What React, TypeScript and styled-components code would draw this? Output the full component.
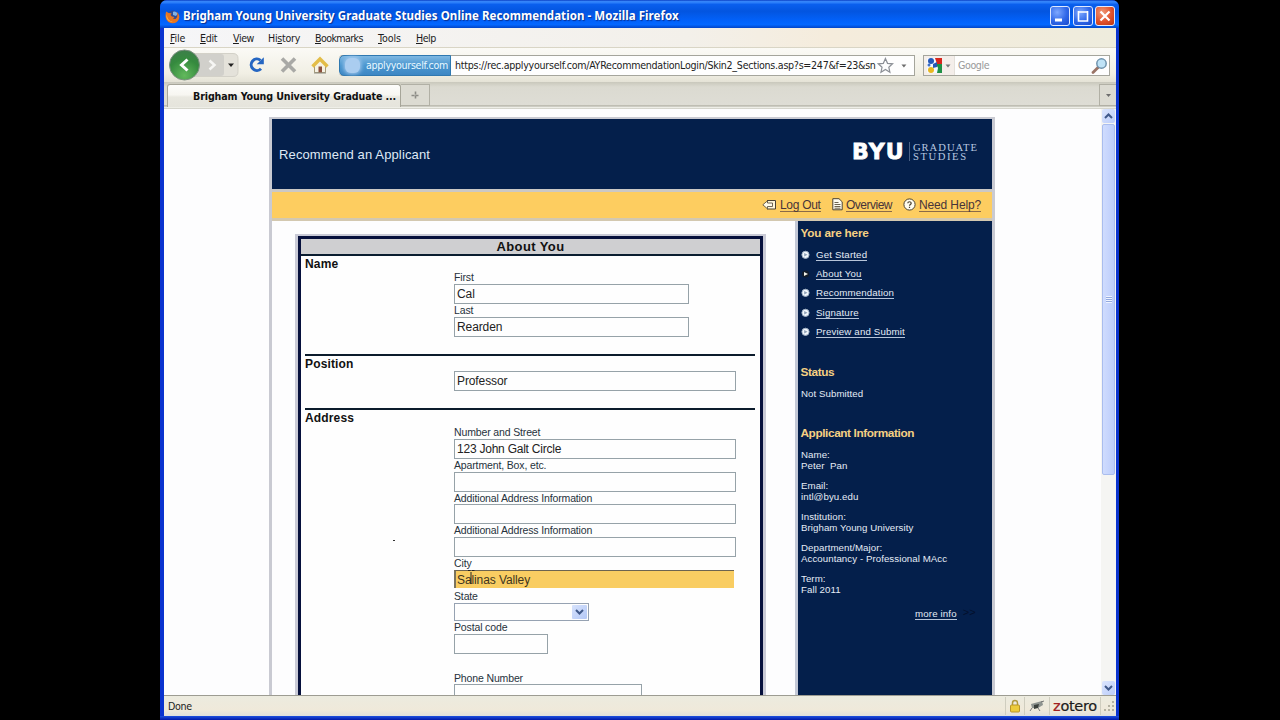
import React from 'react';
import styled, { createGlobalStyle } from 'styled-components';

const chromeFont = '"DejaVu Sans Condensed", "DejaVu Sans", sans-serif';
const pageFont = '"Liberation Sans", Arial, sans-serif';

const GlobalStyle = createGlobalStyle`
  * { box-sizing: border-box; }
  body { margin: 0; background: #000; overflow: hidden; }
`;

const Desktop = styled.div`
  width: 1280px;
  height: 720px;
  padding-left: 160px;
  background: #000;
  overflow: hidden;
`;

const Window = styled.div`
  width: 959px;
  height: 720px;
  display: flex;
  flex-direction: column;
  border-radius: 7px 7px 0 0;
  overflow: hidden;
  background: #0a33cf;
  position: relative;
`;

const TitleBar = styled.div`
  height: 28px;
  flex: none;
  display: flex;
  align-items: center;
  padding: 4px 4px 0 5px;
  background: linear-gradient(#0a3fc4 0, #3a8cff 6%, #0a5fee 16%, #0355e0 40%, #0262fb 75%, #0468ff 88%, #0245c8 100%);
`;

const TitleText = styled.div`
  flex: 1;
  margin-left: 3px;
  color: #fff;
  font: 700 11.5px/20px "Noto Sans", sans-serif;
  letter-spacing: 0.07px;
  white-space: nowrap;
  text-shadow: 1px 1px 1px #0a2f90;
`;

const CaptionButton = styled.div<{ $close?: boolean }>`
  width: 20px;
  height: 20px;
  margin-left: 2.5px;
  border: 1px solid #dfe9ff;
  border-radius: 3px;
  background: ${(p) =>
    p.$close
      ? 'radial-gradient(circle at 35% 30%, #f09a78, #e0512c 55%, #b93412)'
      : 'radial-gradient(circle at 35% 30%, #7ea8ff, #2f67e8 55%, #1848cc)'};
  svg { display: block; }
`;

const Body = styled.div`
  flex: 1;
  min-height: 0;
  margin: 0 3px 0 4px;
  display: flex;
  flex-direction: column;
  background: #efede0;
`;

const MenuBar = styled.div`
  height: 20px;
  flex: none;
  display: flex;
  align-items: center;
  padding-left: 6px;
  background: linear-gradient(90deg, #f6f6f8, #f3f0ea 55%, #f5ecdc 70%, #eeecdd);
  border-bottom: 1px solid #d9d5c5;
  font: 10.6px/18px ${chromeFont};
  color: #1c1c1c;
`;

const MenuItem = styled.span<{ $w: number; $ls?: number }>`
  width: ${(p) => p.$w}px;
  letter-spacing: ${(p) => p.$ls ?? -0.4}px;
  white-space: nowrap;
  u { text-underline-offset: 1px; }
`;

const Toolbar = styled.div`
  height: 34px;
  flex: none;
  display: flex;
  align-items: center;
  padding: 0 6px 0 4px;
  background: linear-gradient(#fbfaf6, #f1efe4 75%, #e4e2d6);
`;

const NavGroup = styled.div`
  width: 72px;
  height: 34px;
  flex: none;
`;

const ToolIcon = styled.div<{ $w: number; $ml: number }>`
  width: ${(p) => p.$w}px;
  height: 20px;
  margin-left: ${(p) => p.$ml}px;
  flex: none;
  svg { display: block; overflow: visible; }
`;

const UrlBar = styled.div`
  width: 576px;
  height: 21px;
  margin-left: 10px;
  flex: none;
  display: flex;
  align-items: center;
  background: #fefefe;
  border: 1px solid #a5a59c;
  border-left: none;
  border-radius: 4px 0 0 4px;
  font: 10.6px/19px ${chromeFont};
`;

const SiteBadge = styled.div`
  width: 112px;
  height: 21px;
  flex: none;
  display: flex;
  align-items: center;
  border: 1px solid #2f78b0;
  border-radius: 5px 0 0 5px;
  background: linear-gradient(#7fb8e2, #4a96cf 50%, #3d87c4);
  color: #e9f8ff;
  letter-spacing: -0.3px;
`;

const BadgeGlow = styled.span`
  width: 15px;
  height: 15px;
  margin: 0 6px 0 5px;
  border-radius: 6px;
  background: #aacdf0;
  box-shadow: 0 0 4px 1px #aacdf0;
`;

const UrlText = styled.div`
  width: 426px;
  margin-left: 4px;
  overflow: hidden;
  white-space: nowrap;
  color: #222;
  letter-spacing: -0.27px;
`;

const SearchBox = styled.div`
  width: 188px;
  height: 21px;
  margin-left: 8px;
  display: flex;
  align-items: center;
  background: #fefefe;
  border: 1px solid #a5a59c;
  font: 10.6px/19px ${chromeFont};
  color: #999;
  letter-spacing: -0.4px;
`;

const SearchEngine = styled.div`
  width: 31px;
  height: 19px;
  margin-right: 3px;
  background: #f4eeea;
  border-right: 1px solid #e4e0da;
`;

const SearchHint = styled.span`
  flex: 1;
`;

const TabStrip = styled.div`
  height: 27px;
  flex: none;
  display: flex;
  align-items: stretch;
  padding: 2px 0 0 3px;
  background: linear-gradient(#c9c8bc 0, #dbdad1 5px, #deddd5 23px, #a09f92 24px, #fafaf4 25px, #c9c9c0 27px);
`;

const Tab = styled.div`
  width: 234px;
  height: 23px;
  padding-left: 25px;
  border: 1px solid #a6a599;
  border-bottom: none;
  border-radius: 3px 3px 0 0;
  background: linear-gradient(#fdfdfb, #f7f6f1 45%, #e9e8e0 55%, #e5e4dc);
  font: 700 10.6px/22px ${chromeFont};
  letter-spacing: -0.11px;
  white-space: nowrap;
  color: #111;
`;

const NewTab = styled.div`
  width: 29px;
  height: 22px;
  border: 1px solid #b1b0a5;
  border-left: none;
  background: #dcdbd2;
`;

const TabMenu = styled.div`
  width: 17px;
  height: 22px;
  margin-left: auto;
  border: 1px solid #b1b0a5;
  border-right: none;
  background: #dcdbd2;
`;

const Viewport = styled.div`
  flex: 1;
  min-height: 0;
  display: flex;
  overflow: hidden;
  background: #fdfdfe;
  position: relative;
`;

const PageArea = styled.div`
  flex: 1;
  padding: 8px 0 0 105px;
  overflow: hidden;
  font-family: ${pageFont};
`;

const Page = styled.div`
  width: 726px;
  height: 600px;
  border: 3px solid #c9cad2;
  border-top-width: 2px;
  border-bottom: none;
  display: flex;
  flex-direction: column;
`;

const Banner = styled.header`
  height: 70px;
  flex: none;
  display: flex;
  align-items: center;
  justify-content: space-between;
  padding: 0 14px 0 7px;
  background: #041f4b;
  color: #dfe9f5;
`;

const BannerTitle = styled.div`
  font-size: 13px;
  letter-spacing: 0.13px;
`;

const Logo = styled.div`
  display: flex;
  align-items: center;
  margin-top: -5px;
`;

const LogoMark = styled.span`
  font: 700 22px/18px "DejaVu Sans", sans-serif;
  letter-spacing: 1.2px;
  color: #fff;
  -webkit-text-stroke: 0.8px #fff;
`;

const LogoWords = styled.div`
  margin-left: 4px;
  padding: 1px 0 0 3px;
  height: 19px;
  border-left: 1px solid #4a6186;
  font: 10.6px/9px "Liberation Serif", serif;
  color: #b9c8e0;
`;

const LogoWord = styled.div<{ $ls: number }>`
  letter-spacing: ${(p) => p.$ls}px;
  white-space: nowrap;
`;

const LinkBar = styled.nav`
  height: 32px;
  flex: none;
  display: flex;
  align-items: center;
  justify-content: flex-end;
  padding-right: 11px;
  background: #fdcd60;
  border-top: 3px solid #cbc8c4;
  border-bottom: 3px solid #d3c8b0;
  font-size: 12px;
  color: #47343a;
`;

const BarLink = styled.span<{ $w: number }>`
  display: flex;
  align-items: center;
  width: ${(p) => p.$w}px;
  svg { flex: none; display: block; }
`;

const BarLinkText = styled.span<{ $ls?: number }>`
  margin: 1px 0 0 3px;
  line-height: 12px;
  border-bottom: 1px solid #8a6a48;
  letter-spacing: ${(p) => p.$ls ?? -0.13}px;
  white-space: nowrap;
`;

const Columns = styled.div`
  flex: 1;
  display: flex;
`;

const MainColumn = styled.main`
  width: 523px;
  padding: 13px 0 0 23px;
`;

const FormFrame = styled.section`
  width: 471px;
  border: 3px solid #c9cad6;
  border-top-width: 2px;
  height: 600px;
`;

const FormPanel = styled.div`
  height: 600px;
  border: 3.5px solid #06103c;
  background: #fefefe;
`;

const FormTitle = styled.h2`
  margin: 0;
  height: 17px;
  border-bottom: 2px solid #0a1d30;
  background: #cfcfd1;
  text-align: center;
  font-size: 13px;
  line-height: 16px;
  letter-spacing: 0.4px;
  color: #111;
`;

const Section = styled.div<{ $h: number }>`
  height: ${(p) => p.$h}px;
  margin: 0 5px 0 4px;
  display: flex;
  border-bottom: 2px solid #0c1c2c;
`;

const SectionLabel = styled.div`
  width: 149px;
  flex: none;
  font-size: 12px;
  font-weight: 700;
  line-height: 17px;
  letter-spacing: 0.15px;
  color: #111;
`;

const Fields = styled.div<{ $top: number }>`
  padding-top: ${(p) => p.$top}px;
`;

const FieldLabel = styled.div<{ $gap?: number }>`
  height: 12.8px;
  margin-top: ${(p) => p.$gap ?? 0}px;
  font-size: 10.5px;
  line-height: 13px;
  letter-spacing: -0.14px;
  white-space: nowrap;
  color: #26323c;
`;

const Input = styled.div<{ $w: number; $ls?: number }>`
  width: ${(p) => p.$w}px;
  height: 20px;
  padding-left: 2px;
  border: 1px solid #96a2a8;
  background: #fefefe;
  font-size: 12px;
  line-height: 19px;
  letter-spacing: ${(p) => p.$ls ?? -0.1}px;
  white-space: nowrap;
  color: #222;
`;

const FocusedInput = styled.div`
  width: 280px;
  height: 18px;
  margin-bottom: 2px;
  padding-left: 1px;
  border-top: 1px solid #6d6450;
  border-left: 2px solid #7b745e;
  background: #f9cd62;
  font-size: 12px;
  line-height: 19px;
  letter-spacing: -0.1px;
  color: #40351f;
`;

const Select = styled.div`
  width: 135px;
  height: 18px;
  padding: 1px;
  display: flex;
  justify-content: flex-end;
  border: 1px solid #96a2b2;
`;

const SelectArrow = styled.div`
  width: 15px;
  height: 14px;
  border-radius: 1px;
  background: linear-gradient(135deg, #d6e2fc, #b4c8f6);
  svg { display: block; }
`;

const Sidebar = styled.aside`
  flex: 1;
  padding-left: 3px;
  border-left: 3px solid #c3c8d6;
  background: #041f4b;
  color: #e4ecf6;
  font-size: 9.7px;
  letter-spacing: 0.06px;
`;

const SideHeading = styled.h3<{ $top: number; $ls?: number }>`
  margin: ${(p) => p.$top}px 0 0 -0.5px;
  font-size: 11.8px;
  line-height: 14px;
  letter-spacing: ${(p) => p.$ls ?? -0.4}px;
  color: #f5d083;
`;

const SideLinks = styled.ul`
  list-style: none;
  margin: 6px 0 0;
  padding: 0;
`;

const SideLink = styled.li`
  height: 19.2px;
  display: flex;
  align-items: center;
  letter-spacing: 0.15px;
  svg { flex: none; display: block; margin: -1px 6px 0 0; }
`;

const Underlined = styled.span`
  line-height: 10px;
  border-bottom: 1px solid #b7c4d8;
`;

const Status = styled.div`
  margin-top: 8px;
  line-height: 13px;
`;

const InfoList = styled.dl`
  margin: 9px 0 0;
  line-height: 11px;
  white-space: pre;
  dt, dd { margin: 0; }
  dd { margin-bottom: 9px; }
`;

const MoreInfo = styled.div`
  margin: 14px 0 0 114px;
  display: flex;
  align-items: center;
  letter-spacing: 0.15px;
`;

const MoreArrows = styled.span`
  margin: -4px 0 0 6px;
  color: #030f2c;
  font-size: 11px;
`;

const ScrollBar = styled.div`
  width: 15px;
  flex: none;
  display: flex;
  flex-direction: column;
  background: #f5f5f3;
`;

const ScrollButton = styled.div`
  height: 14px;
  margin: 0 1px;
  border-radius: 2px;
  background: linear-gradient(135deg, #dbe5fd, #bccdfa);
  svg { display: block; }
`;

const ScrollThumb = styled.div`
  height: 351px;
  margin: 1px 1px auto 1px;
  border: 1px solid #a9bdee;
  border-radius: 2px;
  background: linear-gradient(90deg, #cfdcfe, #bccdfb);
  display: flex;
  align-items: center;
  justify-content: center;
`;

const ThumbGrip = styled.div`
  width: 6px;
  height: 7px;
  background: repeating-linear-gradient(#eef3ff 0 1px, #92a9df 1px 2px);
`;

const StatusBar = styled.div`
  height: 21px;
  flex: none;
  display: flex;
  align-items: center;
  padding-left: 4px;
  border-top: 1px solid #9d9c92;
  background: linear-gradient(#ecebdf, #efe9da 70%, #dfdfdc);
  font: 10.6px/18px ${chromeFont};
  letter-spacing: -0.3px;
  color: #222;
`;

const StatusText = styled.span`
  flex: 1;
`;

const StatusCell = styled.span<{ $w: number }>`
  width: ${(p) => p.$w}px;
  height: 18px;
  display: flex;
  align-items: center;
  justify-content: center;
  border-left: 1px solid #cfcdbf;
`;

const Zotero = styled.span`
  font: 14.5px/15px "DejaVu Sans", sans-serif;
  letter-spacing: -0.3px;
  color: #1d1d1d;
  -webkit-text-stroke: 0.2px;
  b { font-weight: 400; color: #a02020; }
`;

const BottomFrame = styled.div`
  height: 4px;
  flex: none;
  background: linear-gradient(#1c50e0, #0018a8);
`;

const TextCursor = styled.svg`
  position: absolute;
  left: 302px;
  top: 460px;
`;

const Speck = styled.span`
  position: absolute;
  left: 229px;
  top: 431px;
  width: 2px;
  height: 1px;
  background: #333;
`;

const FirefoxIcon = () => (
  <svg width="15" height="15" viewBox="0 0 15 15">
    <circle cx="8" cy="7" r="5.6" fill="#2c4c96" />
    <path d="M8 3c2-1 4 0 4.500 2L11 7 8 6z" fill="#7fb0e6" />
    <path d="M1.200 2.500 3.500 4 6.500 4.200 5.500 6 7 7.500 9.500 8 8 9.800 10.500 10C12.500 8.500 13 6 11.800 3 14 4.500 15 7.500 14 10 12.800 13 10 14.600 7.200 14.300 3.500 14 .8 11 .6 7.500.5 5.500.7 4 1.200 2.500z" fill="#e8751f" />
    <path d="M2 5c-.5 4 2 7.500 6 7.500-3 .8-6.500-1.500-6.500-5z" fill="#fbc153" />
  </svg>
);

const NavButtons = () => (
  <svg width="72" height="34" viewBox="0 0 72 34">
    <defs>
      <radialGradient id="green" cx=".5" cy=".85" r=".9">
        <stop offset="0" stopColor="#62b95c" />
        <stop offset=".6" stopColor="#358a3e" />
        <stop offset="1" stopColor="#3e7c4c" />
      </radialGradient>
    </defs>
    <path d="M20 5.500H65q5 0 5 5V23.500q0 5-5 5H20z" fill="#e4e2da" stroke="#d3d1c8" />
    <path d="M28 6H53q3 0 3 3V25q0 3-3 3H28z" fill="#d1d0cb" />
    <circle cx="16.500" cy="17" r="15" fill="url(#green)" stroke="#7c8f80" />
    <path d="M19.500 11.500 13.500 17l6 5.500" fill="none" stroke="#fff" strokeWidth="3" />
    <path d="M41.500 12.500 46.500 17l-5 4.500" fill="none" stroke="#f6f6f4" strokeWidth="2.500" />
    <path d="M60 15.500h6l-3 3.500z" fill="#222" />
  </svg>
);

const ReloadIcon = () => (
  <svg width="17" height="20" viewBox="0 0 17 20">
    <path d="M12.500 5.300A5.700 5.700 0 1 0 13 13.700" fill="none" stroke="#2566c2" strokeWidth="3" />
    <path d="M15.800 2.200V9.300H8.700z" fill="#2566c2" />
  </svg>
);

const StopIcon = () => (
  <svg width="17" height="20" viewBox="0 0 17 20">
    <path d="M2 3.500 15 16.500M15 3.500 2 16.500" stroke="#a9a9a6" strokeWidth="3.600" />
  </svg>
);

const HomeIcon = () => (
  <svg width="18" height="20" viewBox="0 0 18 20">
    <path d="M3.500 9v8.500h11V9L9 4z" fill="#f5f2e4" stroke="#a79b78" />
    <path d="M1.500 11.500 9 4l7.500 7.500" fill="none" stroke="#e3bd48" strokeWidth="3.400" />
    <path d="M7.500 11.500h3.500v6H7.500z" fill="#8b4f3b" />
    <path d="M3 18h12" stroke="#8c8c80" />
  </svg>
);

const StarIcon = () => (
  <svg width="17" height="17" viewBox="0 0 17 17">
    <path d="M8.500 1.500 10.600 6.300 15.700 6.800 11.900 10.200 13 15.300 8.500 12.600 4 15.300 5.100 10.200 1.300 6.800 6.400 6.300z" fill="#fdfdfd" stroke="#8b8f95" strokeWidth="1.200" />
  </svg>
);

const SmallArrow = ({ w = 17, h = 19, color = '#6d6d6d' }) => (
  <svg width={w} height={h} viewBox={`0 0 ${w} ${h}`}>
    <path d={`M${w / 2 - 2.5} ${h / 2 - 1}h5l-2.500 3z`} fill={color} />
  </svg>
);

const GoogleIcon = () => (
  <svg width="30" height="19" viewBox="0 0 30 19">
    <rect x="3" y="2" width="15" height="15" fill="#f5f8ff" />
    <path d="M11 2h7v6h-5z" fill="#d8261c" />
    <path d="M12 8h6v9h-5l1-5z" fill="#1f9045" />
    <circle cx="7" cy="5" r="3" fill="#2458b8" />
    <path d="M9 8l4-2v5l-4 1z" fill="#2458b8" />
    <circle cx="7" cy="14" r="3" fill="#e8b820" />
    <circle cx="5" cy="9" r="1.500" fill="#3f70c8" />
    <path d="M21.500 8.500h5l-2.500 3z" fill="#777" />
  </svg>
);

const MagnifierIcon = () => (
  <svg width="18" height="19" viewBox="0 0 18 19">
    <path d="M2 16.500 7 11.500" stroke="#9a7466" strokeWidth="2.800" strokeLinecap="round" />
    <circle cx="10.500" cy="7.500" r="4.700" fill="#bfe3f7" stroke="#6f93ad" strokeWidth="1.500" />
  </svg>
);

const LogOutIcon = () => (
  <svg width="15" height="14" viewBox="0 0 15 14">
    <path d="M5 2.500H13.500V11H5" fill="#fff6d8" stroke="#4b4232" />
    <path d="M.8 6.800 5.500 2.800V5H10.500V8.500H5.500V10.800z" fill="#fffbe8" stroke="#4b4232" strokeWidth=".8" />
  </svg>
);

const DocumentIcon = () => (
  <svg width="11" height="15" viewBox="0 0 11 15">
    <path d="M.8.700H7L10.200 3.800V11.800H.8z" fill="#fffdf0" stroke="#4b4232" />
    <path d="M2.500 4.500h4M2.500 6.500h6M2.500 8.500h6M2.500 10.200h6" stroke="#5c523e" strokeWidth=".9" />
  </svg>
);

const HelpIcon = () => (
  <svg width="13" height="15" viewBox="0 0 13 15">
    <circle cx="6.500" cy="6.500" r="5.600" fill="#fffdf0" stroke="#4b4232" />
    <path d="M4.800 5.300C4.800 3.200 8.200 3.300 8.200 5.200 8.200 6.500 6.500 6.400 6.500 7.800M6.500 8.800v1.200" fill="none" stroke="#4b4232" strokeWidth="1.200" />
  </svg>
);

const Bullet = ({ current }: { current?: boolean }) => (
  <svg width="9" height="10" viewBox="0 0 9 10">
    {current ? (
      <circle cx="4.500" cy="5" r="3.600" fill="#131d2b" />
    ) : (
      <circle cx="4.500" cy="4.800" r="3.600" fill="#f2f7fc" stroke="#9fb0c4" />
    )}
    <path d={current ? 'M3 3 7 5 3 7z' : 'M3.200 3 6.500 4.800 3.200 6.600z'} fill={current ? '#f3f3ea' : '#8ea0b5'} />
  </svg>
);

const Chevron = ({ up, w = 13, h = 14 }: { up?: boolean; w?: number; h?: number }) => (
  <svg width={w} height={h} viewBox={`0 0 ${w} ${h}`}>
    <path
      d={up ? `M${w / 2 - 3.5} ${h / 2 + 2}l3.500-3.500 3.500 3.500` : `M${w / 2 - 3.5} ${h / 2 - 2}l3.500 3.500 3.500-3.500`}
      fill="none"
      stroke="#40598a"
      strokeWidth="2"
    />
  </svg>
);

const sideLinks = ['Get Started', 'About You', 'Recommendation', 'Signature', 'Preview and Submit'];

const applicant = [
  ['Name:', 'Peter  Pan'],
  ['Email:', 'intl@byu.edu'],
  ['Institution:', 'Brigham Young University'],
  ['Department/Major:', 'Accountancy - Professional MAcc'],
  ['Term:', 'Fall 2011'],
];

export default function App() {
  return (
    <Desktop>
      <GlobalStyle />
      <Window>
        <TitleBar>
          <FirefoxIcon />
          <TitleText>Brigham Young University Graduate Studies Online Recommendation - Mozilla Firefox</TitleText>
          <CaptionButton>
            <svg width="18" height="18"><path d="M4 13h7" stroke="#fff" strokeWidth="3" /></svg>
          </CaptionButton>
          <CaptionButton>
            <svg width="18" height="18"><path d="M4 5h10M4.500 4v10h9V4" fill="none" stroke="#fff" strokeWidth="1.600" /></svg>
          </CaptionButton>
          <CaptionButton $close>
            <svg width="18" height="18"><path d="M4.500 4.500l9 9M13.500 4.500l-9 9" stroke="#fff" strokeWidth="2.200" /></svg>
          </CaptionButton>
        </TitleBar>
        <Body>
          <MenuBar>
            <MenuItem $w={30} $ls={-0.2}><u>F</u>ile</MenuItem>
            <MenuItem $w={33} $ls={-0.3}><u>E</u>dit</MenuItem>
            <MenuItem $w={35} $ls={-0.4}><u>V</u>iew</MenuItem>
            <MenuItem $w={47} $ls={-0.25}>Hi<u>s</u>tory</MenuItem>
            <MenuItem $w={63} $ls={-0.6}><u>B</u>ookmarks</MenuItem>
            <MenuItem $w={38} $ls={-0.1}><u>T</u>ools</MenuItem>
            <MenuItem $w={40} $ls={-0.5}><u>H</u>elp</MenuItem>
          </MenuBar>
          <Toolbar>
            <NavGroup><NavButtons /></NavGroup>
            <ToolIcon $w={17} $ml={8}><ReloadIcon /></ToolIcon>
            <ToolIcon $w={17} $ml={15}><StopIcon /></ToolIcon>
            <ToolIcon $w={18} $ml={14}><HomeIcon /></ToolIcon>
            <UrlBar>
              <SiteBadge><BadgeGlow />applyyourself.com</SiteBadge>
              <UrlText>https://rec.applyyourself.com/AYRecommendationLogin/Skin2_Sections.asp?s=247&amp;f=23&amp;sn</UrlText>
              <StarIcon />
              <SmallArrow w={20} />
            </UrlBar>
            <SearchBox>
              <SearchEngine><GoogleIcon /></SearchEngine>
              <SearchHint>Google</SearchHint>
              <MagnifierIcon />
            </SearchBox>
          </Toolbar>
          <TabStrip>
            <Tab>Brigham Young University Graduate ...</Tab>
            <NewTab>
              <svg width="28" height="20"><path d="M14.500 6.500v8M10.500 10.500h8" stroke="#8c8c86" strokeWidth="1.600" strokeDasharray="3 1" /></svg>
            </NewTab>
            <TabMenu><SmallArrow w={17} h={20} /></TabMenu>
          </TabStrip>
          <Viewport>
            <PageArea>
              <Page>
                <Banner>
                  <BannerTitle>Recommend an Applicant</BannerTitle>
                  <Logo>
                    <LogoMark>BYU</LogoMark>
                    <LogoWords>
                      <LogoWord $ls={1}>GRADUATE</LogoWord>
                      <LogoWord $ls={1.6}>STUDIES</LogoWord>
                    </LogoWords>
                  </Logo>
                </Banner>
                <LinkBar>
                  <BarLink $w={70}><LogOutIcon /><BarLinkText $ls={-0.3}>Log Out</BarLinkText></BarLink>
                  <BarLink $w={71}><DocumentIcon /><BarLinkText $ls={-0.5}>Overview</BarLinkText></BarLink>
                  <BarLink $w={78}><HelpIcon /><BarLinkText>Need Help?</BarLinkText></BarLink>
                </LinkBar>
                <Columns>
                  <MainColumn>
                    <FormFrame>
                      <FormPanel>
                        <FormTitle>About You</FormTitle>
                        <Section $h={100}>
                          <SectionLabel>Name</SectionLabel>
                          <Fields $top={15}>
                            <FieldLabel>First</FieldLabel>
                            <Input $w={235}>Cal</Input>
                            <FieldLabel>Last</FieldLabel>
                            <Input $w={235}>Rearden</Input>
                          </Fields>
                        </Section>
                        <Section $h={54}>
                          <SectionLabel>Position</SectionLabel>
                          <Fields $top={15}>
                            <Input $w={282}>Professor</Input>
                          </Fields>
                        </Section>
                        <Section $h={400}>
                          <SectionLabel>Address</SectionLabel>
                          <Fields $top={16}>
                            <FieldLabel>Number and Street</FieldLabel>
                            <Input $w={282} $ls={-0.23}>123 John Galt Circle</Input>
                            <FieldLabel>Apartment, Box, etc.</FieldLabel>
                            <Input $w={282} />
                            <FieldLabel>Additional Address Information</FieldLabel>
                            <Input $w={282} />
                            <FieldLabel>Additional Address Information</FieldLabel>
                            <Input $w={282} />
                            <FieldLabel>City</FieldLabel>
                            <FocusedInput>Salinas Valley</FocusedInput>
                            <FieldLabel>State</FieldLabel>
                            <Select><SelectArrow><Chevron w={15} /></SelectArrow></Select>
                            <FieldLabel>Postal code</FieldLabel>
                            <Input $w={94} />
                            <FieldLabel $gap={18}>Phone Number</FieldLabel>
                            <Input $w={188} />
                          </Fields>
                        </Section>
                      </FormPanel>
                    </FormFrame>
                  </MainColumn>
                  <Sidebar>
                    <SideHeading $top={5} $ls={-0.2}>You are here</SideHeading>
                    <SideLinks>
                      {sideLinks.map((label) => (
                        <SideLink key={label}>
                          <Bullet current={label === 'About You'} />
                          <Underlined>{label}</Underlined>
                        </SideLink>
                      ))}
                    </SideLinks>
                    <SideHeading $top={23}>Status</SideHeading>
                    <Status>Not Submitted</Status>
                    <SideHeading $top={26}>Applicant Information</SideHeading>
                    <InfoList>
                      {applicant.map(([term, value]) => (
                        <React.Fragment key={term}>
                          <dt>{term}</dt>
                          <dd>{value}</dd>
                        </React.Fragment>
                      ))}
                    </InfoList>
                    <MoreInfo>
                      <Underlined>more info</Underlined>
                      <MoreArrows>&gt;&gt;</MoreArrows>
                    </MoreInfo>
                  </Sidebar>
                </Columns>
              </Page>
            </PageArea>
            <ScrollBar>
              <ScrollButton><Chevron up /></ScrollButton>
              <ScrollThumb><ThumbGrip /></ScrollThumb>
              <ScrollButton><Chevron /></ScrollButton>
            </ScrollBar>
            <TextCursor width="10" height="18" viewBox="0 0 10 18">
              <path d="M2 1.500h2.500M6 1.500h2.500M5 3v12" stroke="#222" fill="none" />
            </TextCursor>
            <Speck />
          </Viewport>
          <StatusBar>
            <StatusText>Done</StatusText>
            <StatusCell $w={19}>
              <svg width="12" height="14" viewBox="0 0 12 14">
                <path d="M3.500 7V4a2.500 2.500 0 0 1 5 0v3" fill="none" stroke="#b0993c" strokeWidth="1.500" />
                <rect x="1.500" y="6" width="9" height="7" rx="1" fill="#eccb3b" stroke="#b8952a" />
              </svg>
            </StatusCell>
            <StatusCell $w={25}>
              <svg width="16" height="14" viewBox="0 0 16 14">
                <path d="M2 5 13 2 14 6 9 9 3 9z" fill="#8f9490" />
                <path d="M5 6 10 5 9 9 5 10z" fill="#3b403c" />
                <path d="M3 9 1 12M9 9l2 3M12 3l3-1" stroke="#777" />
              </svg>
            </StatusCell>
            <StatusCell $w={51}><Zotero><b>z</b>otero</Zotero></StatusCell>
            <StatusCell $w={16}>
              <svg width="12" height="14" viewBox="0 0 12 14">
                <path d="M9 3h2M9 7h2M5 7h2M9 11h2M5 11h2M1 11h2" stroke="#b5b2a2" strokeWidth="2" />
              </svg>
            </StatusCell>
          </StatusBar>
        </Body>
        <BottomFrame />
      </Window>
    </Desktop>
  );
}
